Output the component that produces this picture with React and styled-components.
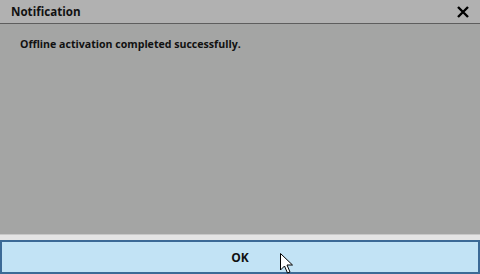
import styled, { createGlobalStyle } from "styled-components";

const Global = createGlobalStyle`
  html, body { margin: 0; padding: 0; }
  body { width: 480px; height: 274px; overflow: hidden; font-family: "Open Sans", "Noto Sans", sans-serif; }
`;

const Dialog = styled.div`
  position: relative;
  width: 480px;
  height: 274px;
  display: flex;
  flex-direction: column;
  background: #a4a5a4;
`;

const TitleBar = styled.div`
  height: 24px;
  flex: none;
  display: flex;
  align-items: center;
  justify-content: space-between;
  padding: 0 11px;
  background: #b1b1b1;
  border-bottom: 1px solid #5e5e5e;
  box-sizing: border-box;
`;

const Title = styled.span`
  font-size: 11.6px;
  font-weight: 700;
  color: #111;
`;

const Close = styled.button`
  border: 0;
  background: none;
  padding: 0;
  margin-right: -1px;
  display: flex;
  cursor: pointer;
`;

const Body = styled.div`
  flex: 1;
  padding: 13px 20px;
  font-size: 10.6px;
  font-weight: 700;
  color: #111;
`;

const Footer = styled.div`
  flex: none;
  padding-top: 5px;
  background: #e4e4e4;
  border-top: 1px solid #c8c8c8;
`;

const OkButton = styled.button`
  width: 100%;
  height: 34px;
  box-sizing: border-box;
  border: 2px solid #3c6a96;
  background: #c2e3f5;
  font-family: inherit;
  font-size: 12px;
  font-weight: 700;
  color: #111;
  display: block;
`;

const Cursor = styled.svg`
  position: absolute;
  left: 280px;
  top: 253px;
  pointer-events: none;
`;

export default function App() {
  return (
    <>
      <Global />
      <Dialog>
        <TitleBar>
          <Title>Notification</Title>
          <Close>
            <svg width="14" height="14" viewBox="0 0 14 14">
              <path d="M2 2 L12 12 M12 2 L2 12" stroke="#000" strokeWidth="2.4" />
            </svg>
          </Close>
        </TitleBar>
        <Body>Offline activation completed successfully.</Body>
        <Footer>
          <OkButton>OK</OkButton>
        </Footer>
        <Cursor width="13" height="21" viewBox="0 0 13 21">
          <path d="M0.5 0.5 V17 L4.5 13 L7.5 20 L10 19 L7 12 H12.5 Z" fill="#fff" stroke="#000" strokeWidth="1" />
        </Cursor>
      </Dialog>
    </>
  );
}
